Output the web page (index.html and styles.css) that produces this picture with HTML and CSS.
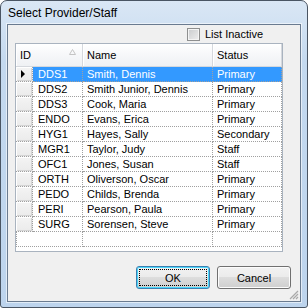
FILE: index.html
```html
<!DOCTYPE html>
<html lang="en">
<head>
    <meta charset="UTF-8">
    <meta name="viewport" content="width=device-width, initial-scale=1.0">
    <title>Select Provider/Staff</title>
    <link rel="stylesheet" href="styles.css">
</head>
<body>
    <div class="window">
        <div class="title">Select Provider/Staff</div>
        <div class="client">
            <div class="options">
                <label class="check"><span class="box"></span>List Inactive</label>
            </div>

            <div class="grid">
                <table>
                    <colgroup>
                        <col class="c-head">
                        <col class="c-id">
                        <col class="c-name">
                        <col class="c-status">
                    </colgroup>
                    <thead>
                        <tr>
                            <th colspan="2"><div class="hcell">ID
                                <svg class="sort" width="7" height="6" viewBox="0 0 7 6"><path d="M3.5 0.5 L6.5 5.5 L0.5 5.5 Z" fill="none" stroke="#c4c4c4" stroke-width="1"/></svg>
                            </div></th>
                            <th><div class="hcell">Name</div></th>
                            <th><div class="hcell">Status</div></th>
                        </tr>
                    </thead>
                    <tbody>
                        <tr class="selected">
                            <td class="rowhead"><svg width="5" height="8" viewBox="0 0 5 8"><path d="M0 0 L4 4 L0 8 Z" fill="#000"/></svg></td>
                            <td>DDS1</td><td>Smith, Dennis</td><td>Primary</td>
                        </tr>
                        <tr><td class="rowhead"></td><td>DDS2</td><td>Smith Junior, Dennis</td><td>Primary</td></tr>
                        <tr><td class="rowhead"></td><td>DDS3</td><td>Cook, Maria</td><td>Primary</td></tr>
                        <tr><td class="rowhead"></td><td>ENDO</td><td>Evans, Erica</td><td>Primary</td></tr>
                        <tr><td class="rowhead"></td><td>HYG1</td><td>Hayes, Sally</td><td>Secondary</td></tr>
                        <tr><td class="rowhead"></td><td>MGR1</td><td>Taylor, Judy</td><td>Staff</td></tr>
                        <tr><td class="rowhead"></td><td>OFC1</td><td>Jones, Susan</td><td>Staff</td></tr>
                        <tr><td class="rowhead"></td><td>ORTH</td><td>Oliverson, Oscar</td><td>Primary</td></tr>
                        <tr><td class="rowhead"></td><td>PEDO</td><td>Childs, Brenda</td><td>Primary</td></tr>
                        <tr><td class="rowhead"></td><td>PERI</td><td>Pearson, Paula</td><td>Primary</td></tr>
                        <tr><td class="rowhead"></td><td>SURG</td><td>Sorensen, Steve</td><td>Primary</td></tr>
                        <tr class="blank"><td colspan="2"></td><td></td><td></td></tr>
                    </tbody>
                </table>
            </div>

            <div class="buttons">
                <button class="default">OK</button>
                <button>Cancel</button>
            </div>

            <svg class="grip" width="11" height="11" viewBox="0 0 11 11">
                <path d="M10 2 L2 10 M10 5 L5 10 M10 8 L8 10" stroke="#a9a9a9" stroke-width="1.2"/>
            </svg>
        </div>
    </div>
</body>
</html>
```

FILE: styles.css
```css
body {
    margin: 0;
    font-family: "Liberation Sans", Arial, sans-serif;
    font-size: 11px;
    color: #000;
}
.window {
    width: 308px;
    height: 308px;
    box-sizing: border-box;
    border: 1px solid #4a5563;
    border-radius: 7px 7px 3px 3px;
    padding: 0 6px 5px;
    background: linear-gradient(#dae7f5, #c4d9ef 60px, #bdd4ed);
    display: flex;
    flex-direction: column;
}
.title {
    height: 23px;
    line-height: 25px;
    padding-left: 1px;
    font-size: 12px;
    color: #000;
}
.client {
    flex: 1;
    position: relative;
    border: 1px solid #6a7b90;
    background: #f0f0f0;
    box-shadow: 0 0 0 1px rgba(255, 255, 255, 0.55);
    display: flex;
    flex-direction: column;
}
.options {
    height: 18px;
    padding-left: 179px;
    display: flex;
    align-items: flex-start;
}
.check {
    margin-top: 3px;
    display: flex;
    align-items: center;
    gap: 5px;
    line-height: 13px;
}
.box {
    width: 13px;
    height: 13px;
    box-sizing: border-box;
    border: 1px solid #8e8f8f;
    background: linear-gradient(135deg, #c9cbcd, #eeeeef);
    box-shadow: inset 0 0 0 1px #f4f4f4;
}
.grid {
    margin-left: 7px;
    width: 268px;
    height: 209px;
    box-sizing: border-box;
    border: 1px solid #a9b3bf;
    background: #fff;
    overflow: hidden;
}
table {
    width: 266px;
    table-layout: fixed;
    border-collapse: separate;
    border-spacing: 0;
}
.c-head { width: 17px; }
.c-id { width: 50px; }
.c-name { width: 130px; }
.c-status { width: 69px; }
th {
    height: 22px;
    padding: 0;
    font-weight: normal;
    text-align: left;
    background: linear-gradient(#ffffff, #f6f7f9 50%, #eff1f4);
    border-right: 1px solid #d5d8dd;
    border-bottom: 1px solid #d5d8dd;
    box-shadow: inset 1px 1px 0 #ffffff;
}
.hcell {
    display: flex;
    align-items: center;
    justify-content: space-between;
    padding: 0 6px 0 4px;
    line-height: 22px;
}
.sort {
    margin-top: -7px;
}
td {
    height: 14px;
    padding: 0 0 0 4px;
    line-height: 14px;
    white-space: nowrap;
    overflow: hidden;
    border-right: 1px dotted #a0a0a0;
    border-bottom: 1px dotted #a0a0a0;
}
td.rowhead {
    padding: 0 0 0 5px;
    background: linear-gradient(#f4f4f4, #ebebeb);
    box-shadow: inset 1px 1px 0 #ffffff, inset -1px -1px 0 #d4d4d4;
}
td.rowhead svg {
    display: block;
}
tr td:nth-child(2) {
    padding-left: 5px;
}
.selected td:not(.rowhead) {
    background: #3399ff;
    color: #fff;
}
.blank td {
    background: #fff;
}
.blank td:first-child {
    border-left: 1px dotted #a0a0a0;
}
.buttons {
    margin-top: 14px;
    padding-right: 9px;
    display: flex;
    justify-content: flex-end;
    gap: 7px;
}
button {
    width: 74px;
    height: 23px;
    padding: 0;
    font-family: "Liberation Sans", Arial, sans-serif;
    font-size: 11px;
    color: #000;
    border: 1px solid #707070;
    border-radius: 3px;
    background: linear-gradient(#f2f2f2, #ebebeb 50%, #dddddd 50%, #cfcfcf);
    box-shadow: inset 0 0 0 1px #fcfcfc;
}
button.default {
    border-color: #3c7fb1;
    box-shadow: inset 0 0 0 1px #48d7fb;
    outline: 1px dotted #000;
    outline-offset: -4px;
}
.grip {
    position: absolute;
    right: 1px;
    bottom: 1px;
}
```
